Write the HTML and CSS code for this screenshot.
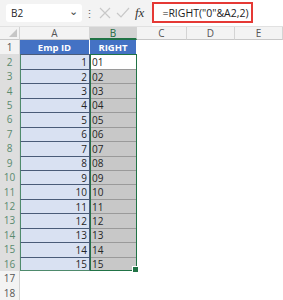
FILE: index.html
```html
<!DOCTYPE html>
<html lang="en">

<head>
    <meta charset="UTF-8">
    <title>RIGHT formula</title>
    <link rel="stylesheet" href="styles.css">
</head>

<body>
    <div class="formula-bar">
        <div class="name-box"><span>B2</span><span class="chev">&#8964;</span></div>
        <div class="dots">&#8942;</div>
        <div class="icons">
            <svg width="14" height="14" viewBox="0 0 14 14"><path d="M2 2 L12 12 M12 2 L2 12" stroke="#c8c8c8" stroke-width="1.2" fill="none"/></svg>
            <svg width="14" height="14" viewBox="0 0 14 14"><path d="M1 7 L5 11 L13 2" stroke="#c8c8c8" stroke-width="1.2" fill="none"/></svg>
            <span class="fx">fx</span>
        </div>
        <div class="formula-input">
            <div class="formula-box">=RIGHT("0"&amp;A2,2)</div>
        </div>
    </div>

    <div class="sheet">
        <div class="corner"><span class="tri"></span></div>
        <div class="col-head">A</div>
        <div class="col-head active">B</div>
        <div class="col-head">C</div>
        <div class="col-head">D</div>
        <div class="col-head">E</div>

        <div class="row-head">1</div>
        <div class="cell th">Emp ID</div>
        <div class="cell th">RIGHT</div>
        <div class="cell"></div><div class="cell"></div><div class="cell"></div>

        <div class="row-head active">2</div>
        <div class="cell num">1</div>
        <div class="cell txt current">01</div>
        <div class="cell"></div><div class="cell"></div><div class="cell"></div>

        <div class="row-head active">3</div>
        <div class="cell num">2</div>
        <div class="cell txt sel">02</div>
        <div class="cell"></div><div class="cell"></div><div class="cell"></div>

        <div class="row-head active">4</div>
        <div class="cell num">3</div>
        <div class="cell txt sel">03</div>
        <div class="cell"></div><div class="cell"></div><div class="cell"></div>

        <div class="row-head active">5</div>
        <div class="cell num">4</div>
        <div class="cell txt sel">04</div>
        <div class="cell"></div><div class="cell"></div><div class="cell"></div>

        <div class="row-head active">6</div>
        <div class="cell num">5</div>
        <div class="cell txt sel">05</div>
        <div class="cell"></div><div class="cell"></div><div class="cell"></div>

        <div class="row-head active">7</div>
        <div class="cell num">6</div>
        <div class="cell txt sel">06</div>
        <div class="cell"></div><div class="cell"></div><div class="cell"></div>

        <div class="row-head active">8</div>
        <div class="cell num">7</div>
        <div class="cell txt sel">07</div>
        <div class="cell"></div><div class="cell"></div><div class="cell"></div>

        <div class="row-head active">9</div>
        <div class="cell num">8</div>
        <div class="cell txt sel">08</div>
        <div class="cell"></div><div class="cell"></div><div class="cell"></div>

        <div class="row-head active">10</div>
        <div class="cell num">9</div>
        <div class="cell txt sel">09</div>
        <div class="cell"></div><div class="cell"></div><div class="cell"></div>

        <div class="row-head active">11</div>
        <div class="cell num">10</div>
        <div class="cell txt sel">10</div>
        <div class="cell"></div><div class="cell"></div><div class="cell"></div>

        <div class="row-head active">12</div>
        <div class="cell num">11</div>
        <div class="cell txt sel">11</div>
        <div class="cell"></div><div class="cell"></div><div class="cell"></div>

        <div class="row-head active">13</div>
        <div class="cell num">12</div>
        <div class="cell txt sel">12</div>
        <div class="cell"></div><div class="cell"></div><div class="cell"></div>

        <div class="row-head active">14</div>
        <div class="cell num">13</div>
        <div class="cell txt sel">13</div>
        <div class="cell"></div><div class="cell"></div><div class="cell"></div>

        <div class="row-head active">15</div>
        <div class="cell num">14</div>
        <div class="cell txt sel">14</div>
        <div class="cell"></div><div class="cell"></div><div class="cell"></div>

        <div class="row-head active">16</div>
        <div class="cell num last">15</div>
        <div class="cell txt sel">15</div>
        <div class="cell"></div><div class="cell"></div><div class="cell"></div>

        <div class="row-head">17</div>
        <div class="cell"></div><div class="cell"></div>
        <div class="cell"></div><div class="cell"></div><div class="cell"></div>

        <div class="row-head">18</div>
        <div class="cell"></div><div class="cell"></div>
        <div class="cell"></div><div class="cell"></div><div class="cell"></div>

        <div class="selection"></div>
    </div>
</body>

</html>
```

FILE: styles.css
```css
* {
    padding: 0;
    margin: 0;
    box-sizing: border-box;
}

body {
    background-color: #fff;
    font-family: "Open Sans", Arial, sans-serif;
    color: #262626;
    width: 283px;
    height: 300px;
    overflow: hidden;
}

.formula-bar {
    height: 27px;
    background-color: #f3f3f3;
    display: flex;
    align-items: center;
    border-bottom: 1px solid #e1e1e1;
}

.name-box {
    margin-left: 6px;
    width: 76px;
    height: 18px;
    background-color: #fff;
    border-radius: 3px;
    display: flex;
    align-items: center;
    justify-content: space-between;
    padding: 0 4px 0 5px;
    font-size: 10px;
}

.chev {
    font-size: 11px;
    line-height: 1;
    margin-top: -6px;
    color: #444;
}

.dots {
    width: 14px;
    text-align: center;
    font-size: 11px;
    color: #666;
}

.icons {
    display: flex;
    align-items: center;
    gap: 4px;
    margin-left: 2px;
}

.fx {
    font-family: "Liberation Serif", serif;
    font-style: italic;
    font-size: 13px;
    color: #333;
    margin-left: 1px;
}

.formula-input {
    flex: 1;
    align-self: stretch;
    background-color: #fff;
    margin-left: 8px;
    padding: 2px 0 3px 0;
}

.formula-box {
    width: 101px;
    height: 100%;
    border: 2px solid #e53935;
    font-size: 10.5px;
    display: flex;
    align-items: center;
    padding-left: 8px;
    color: #222;
}

.sheet {
    display: grid;
    grid-template-columns: 20px 70px 47px 50px 48px 48px;
    grid-template-rows: 13px repeat(18, 14.44px);
    font-size: 10px;
    position: relative;
}

.corner {
    background-color: #f3f3f3;
    border-right: 1px solid #d4d4d4;
    border-bottom: 1px solid #c8c8c8;
    position: relative;
}

.tri {
    position: absolute;
    right: 2px;
    bottom: 2px;
    border-left: 8px solid transparent;
    border-bottom: 8px solid #c6c6c6;
}

.col-head {
    background-color: #f3f3f3;
    border-right: 1px solid #d4d4d4;
    border-bottom: 1px solid #c8c8c8;
    display: flex;
    align-items: center;
    justify-content: center;
    color: #555;
    font-size: 10px;
}

.col-head.active {
    background-color: #d3d3d3;
    color: #1e6b41;
    border-bottom: 2px solid #217346;
}

.row-head {
    background-color: #f3f3f3;
    border-right: 1px solid #d4d4d4;
    display: flex;
    align-items: center;
    justify-content: center;
    color: #555;
    font-size: 10px;
}

.row-head.active {
    background-color: #dedede;
    color: #5a8a6e;
}

.cell {
    display: flex;
    align-items: center;
    overflow: hidden;
    white-space: nowrap;
}

.th {
    background-color: #4472c4;
    color: #fff;
    font-weight: bold;
    justify-content: center;
    font-size: 9.5px;
    border-right: 1px solid #fff;
}

.num {
    background-color: #d9e1f2;
    justify-content: flex-end;
    padding-right: 2px;
    border-top: 1px solid #4a5b78;
    border-left: 1px solid #4e8a6c;
    border-right: 1px solid #4a5b78;
}

.num.last {
    border-bottom: 1px solid #4e8a6c;
}

.txt {
    padding-left: 2px;
    border-top: 1px solid #9a9a9a;
}

.current {
    background-color: #fff;
    border-top: none;
}

.sel {
    background-color: #c8c8c8;
}

.selection {
    position: absolute;
    inset: 0;
    grid-column: 3 / 4;
    grid-row: 3 / 18;
    border: 1px solid #217346;
    pointer-events: none;
}

.selection::after {
    content: "";
    position: absolute;
    right: -3px;
    bottom: -3px;
    width: 5px;
    height: 5px;
    background-color: #217346;
    border: 1px solid #fff;
}
```
